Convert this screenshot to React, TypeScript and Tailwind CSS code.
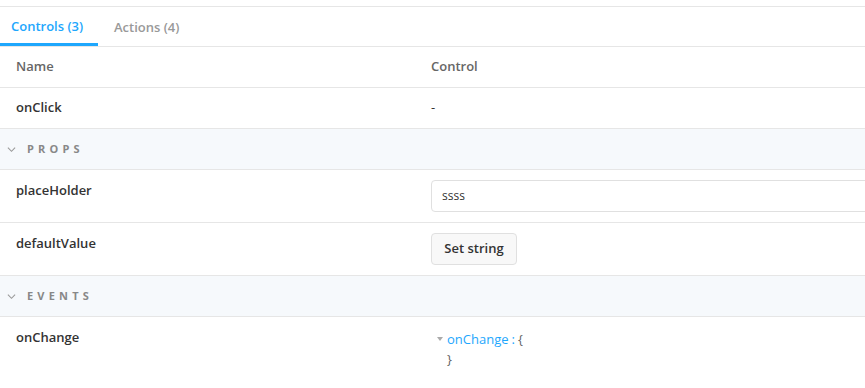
import React from 'react';

const font = { fontFamily: '"Open Sans", "Noto Sans", sans-serif' };

function Chevron() {
  return (
    <svg width="9" height="9" viewBox="0 0 10 10" className="mr-[11px]">
      <path d="M1 3 L5 7 L9 3" fill="none" stroke="#999" strokeWidth="1.2" />
    </svg>
  );
}

function Section({ title }: { title: string }) {
  return (
    <div className="flex h-[41px] items-center border-b border-[#e6e6e6] bg-[#f6f9fc] pl-[7px]">
      <Chevron />
      <span className="text-[11px] font-bold tracking-[0.38em] text-[#888]">{title}</span>
    </div>
  );
}

function Row({ name, children, tall }: { name: string; children: React.ReactNode; tall?: boolean }) {
  return (
    <div className={`flex border-b border-[#e6e6e6] ${tall ? 'h-[53px]' : 'h-[41px]'}`}>
      <div className={`w-[416px] shrink-0 pl-[16px] text-[13px] font-semibold text-[#333] ${tall ? 'pt-[11px]' : 'flex items-center'}`}>
        {name}
      </div>
      <div className={`flex-1 pl-[15px] ${tall ? 'pt-[10px]' : 'flex items-center'}`}>{children}</div>
    </div>
  );
}

export default function App() {
  return (
    <div className="min-h-screen w-[865px] overflow-hidden bg-white pt-[6px]" style={font}>
      <div className="border-t border-[#e6e6e6]">
        {/* Tabs */}
        <div className="flex h-[40px] items-end border-b border-[#e6e6e6]">
          <div className="flex h-full w-[98px] items-center border-b-[3px] border-[#1ea7fd] pl-[11px] pt-[3px] text-[13px] font-semibold text-[#1ea7fd]">
            Controls (3)
          </div>
          <div className="flex h-full items-center px-[16px] pt-[3px] text-[13px] font-semibold text-[#999]">
            Actions (4)
          </div>
        </div>

        {/* Header */}
        <div className="flex h-[41px] border-b border-[#e6e6e6] text-[13px] font-semibold text-[#666]">
          <div className="flex w-[416px] items-center pl-[16px]">Name</div>
          <div className="flex items-center pl-[15px]">Control</div>
        </div>

        <Row name="onClick">
          <span className="text-[13px] text-[#333]">-</span>
        </Row>

        <Section title="PROPS" />

        <Row name="placeHolder" tall>
          <div className="flex h-[32px] w-[460px] items-center rounded-[4px] border border-[#e0e0e0] px-[10px] text-[12px] text-[#333]">
            ssss
          </div>
        </Row>

        <Row name="defaultValue" tall>
          <button className="h-[32px] w-[86px] rounded-[4px] border border-[#e0e0e0] bg-[#f8f8f8] text-[13px] font-semibold text-[#333]">
            Set string
          </button>
        </Row>

        <Section title="EVENTS" />

        <div className="flex h-[80px]">
          <div className="w-[416px] shrink-0 pl-[16px] pt-[11px] text-[13px] font-semibold text-[#333]">onChange</div>
          <div className="flex-1 pl-[21px] pt-[12px] text-[13px] leading-[20px]">
            <div className="flex items-center">
              <svg width="6" height="4" viewBox="0 0 6 4" className="mr-[4px]">
                <path d="M0 0 L6 0 L3 4 Z" fill="#aaa" />
              </svg>
              <span className="text-[#1ea7fd]">onChange</span>
              <span className="mx-[3px] text-[#1ea7fd]">:</span>
              <span className="text-[#666]">{'{'}</span>
            </div>
            <div className="pl-[10px] text-[#666]">{'}'}</div>
          </div>
        </div>
      </div>
    </div>
  );
}
